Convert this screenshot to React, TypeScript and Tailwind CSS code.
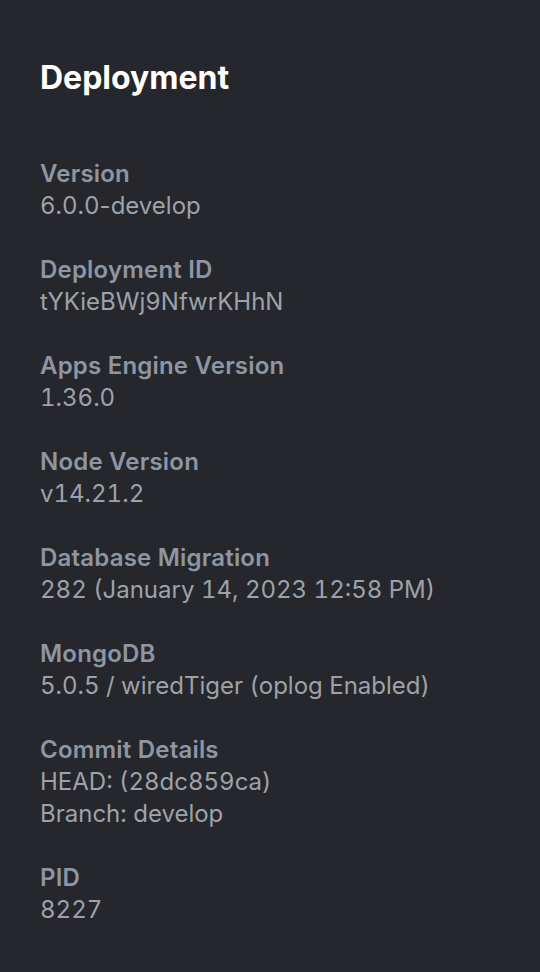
import React from "react";

const items: { label: string; values: string[] }[] = [
  { label: "Version", values: ["6.0.0-develop"] },
  { label: "Deployment ID", values: ["tYKieBWj9NfwrKHhN"] },
  { label: "Apps Engine Version", values: ["1.36.0"] },
  { label: "Node Version", values: ["v14.21.2"] },
  { label: "Database Migration", values: ["282 (January 14, 2023 12:58 PM)"] },
  { label: "MongoDB", values: ["5.0.5 / wiredTiger (oplog Enabled)"] },
  { label: "Commit Details", values: ["HEAD: (28dc859ca)", "Branch: develop"] },
  { label: "PID", values: ["8227"] },
];

function Value({ text }: { text: string }) {
  const parts = text.split("-");
  return (
    <>
      {parts.map((p, i) => (
        <React.Fragment key={i}>
          {i > 0 && <span className="normal-nums">-</span>}
          {p}
        </React.Fragment>
      ))}
    </>
  );
}

export default function App() {
  return (
    <div
      className="w-[540px] h-[972px] bg-[#25272c] px-[40px] pt-[58px] overflow-hidden"
      style={{ fontFamily: "Inter, 'Noto Sans', sans-serif" }}
    >
      <h1 className="text-[32px] leading-[40px] font-bold text-white">Deployment</h1>
      <div className="mt-[60px] flex flex-col gap-[32px]">
        {items.map((it) => (
          <div key={it.label} className="flex flex-col">
            <div className="text-[24px] leading-[32px] font-semibold tracking-[0.2px] text-[#8f96a3]">{it.label}</div>
            {it.values.map((v) => (
              <div key={v} className="text-[24px] leading-[32px] tabular-nums text-[#9ea2a8]">
                <Value text={v} />
              </div>
            ))}
          </div>
        ))}
      </div>
    </div>
  );
}
